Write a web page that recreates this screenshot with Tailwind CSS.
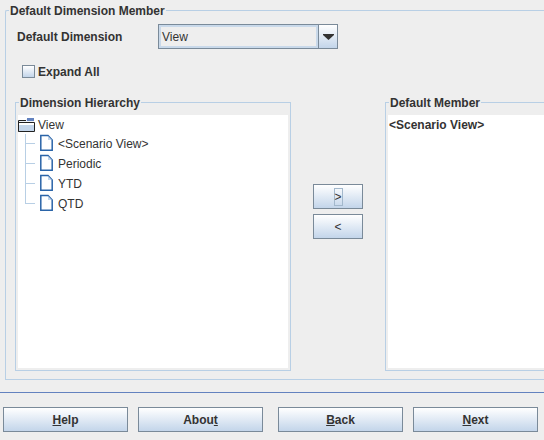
<!DOCTYPE html>
<html>
<head>
<meta charset="utf-8">
<script src="https://cdn.jsdelivr.net/npm/@tailwindcss/browser@4"></script>
</head>
<body class="w-[544px] h-[440px] overflow-hidden bg-[#eeeeee] text-[#333333] text-[12px] font-['Liberation_Sans',Arial,sans-serif]">

  <!-- Default Dimension Member group -->
  <fieldset class="ml-[5px] mt-[2px] w-[539px] h-[378px] border border-r-0 border-[#b8cfe5] rounded-tl-[2px]">
    <legend class="ml-[3px] px-[1px] pt-[2px] font-bold leading-[14px]">Default Dimension Member</legend>

    <div class="flex items-center mt-[6px] h-[25px]">
      <label class="ml-[11px] w-[141px] font-bold">Default Dimension</label>
      <div class="flex w-[180px] h-[25px] border border-[#7a8a99] bg-[#eeeeee]">
        <div class="flex-1 flex items-center pl-[1px] border-2 border-[#c9d9ea]">View</div>
        <div class="w-[19px] flex items-center justify-center border-l border-[#7a8a99] bg-gradient-to-b from-white to-[#c3d5ea]">
          <svg width="11" height="6" viewBox="0 0 11 6"><path d="M0 0H11V1L5.500 6L0 1Z" fill="#333333"/></svg>
        </div>
      </div>
    </div>

    <div class="flex items-center mt-[16px] ml-[16px] h-[13px]">
      <div class="w-[13px] h-[13px] border border-[#7a8a99] bg-gradient-to-b from-white to-[#c3d5ea]"></div>
      <span class="ml-[3px] font-bold">Expand All</span>
    </div>

    <div class="flex mt-[16px] ml-[9px]">
      <!-- left list -->
      <fieldset class="w-[276px] h-[277px] border border-[#b8cfe5] px-[2px] pt-[5px] pb-[2px]">
        <legend class="ml-[1px] px-[1px] pt-[2px] font-bold leading-[14px]">Dimension Hierarchy</legend>
        <div class="h-full bg-white">
          <div class="flex items-center h-[19px]">
            <svg width="17" height="14" viewBox="0 0 17 14" class="shrink-0">
              <path d="M1 3H8V1H16V5H1Z" fill="#eef3fa"/>
              <path d="M9 0H16V3H9Z" fill="#6382bf"/>
              <path d="M1 5H16V7H1Z" fill="#ffffff"/>
              <path d="M1 7H16V13H1Z" fill="#c3d5ea"/>
              <path d="M.5 13.500V2.500H8M.5 4.500H16.500V13.500H.5Z" fill="none" stroke="#222222"/>
            </svg>
            <span class="ml-[3px]">View</span>
          </div>
          <div class="flex items-center h-[20px]">
            <svg width="28" height="20" viewBox="0 0 28 20" class="shrink-0 ml-[7px]"><path d="M.5 0V20M0 9.500H10" stroke="#b8cfe5" fill="none"/><path d="M23 1.500H15.800V16.200H27.200V6Z" fill="#fff" stroke="#2a64a8" stroke-width="1.500"/><path d="M23 2V6H27" fill="#c3d5ea"/></svg>
            <span class="ml-[5px]">&lt;Scenario View&gt;</span>
          </div>
          <div class="flex items-center h-[20px]">
            <svg width="28" height="20" viewBox="0 0 28 20" class="shrink-0 ml-[7px]"><path d="M.5 0V20M0 9.500H10" stroke="#b8cfe5" fill="none"/><path d="M23 1.500H15.800V16.200H27.200V6Z" fill="#fff" stroke="#2a64a8" stroke-width="1.500"/><path d="M23 2V6H27" fill="#c3d5ea"/></svg>
            <span class="ml-[5px]">Periodic</span>
          </div>
          <div class="flex items-center h-[20px]">
            <svg width="28" height="20" viewBox="0 0 28 20" class="shrink-0 ml-[7px]"><path d="M.5 0V20M0 9.500H10" stroke="#b8cfe5" fill="none"/><path d="M23 1.500H15.800V16.200H27.200V6Z" fill="#fff" stroke="#2a64a8" stroke-width="1.500"/><path d="M23 2V6H27" fill="#c3d5ea"/></svg>
            <span class="ml-[5px]">YTD</span>
          </div>
          <div class="flex items-center h-[20px]">
            <svg width="28" height="20" viewBox="0 0 28 20" class="shrink-0 ml-[7px]"><path d="M.5 0V10M0 9.500H10" stroke="#b8cfe5" fill="none"/><path d="M23 1.500H15.800V16.200H27.200V6Z" fill="#fff" stroke="#2a64a8" stroke-width="1.500"/><path d="M23 2V6H27" fill="#c3d5ea"/></svg>
            <span class="ml-[5px]">QTD</span>
          </div>
        </div>
      </fieldset>

      <!-- move buttons -->
      <div class="flex flex-col gap-[5px] w-[50px] ml-[22px] mt-[90px]">
        <button class="h-[25px] border border-[#7a8a99] bg-gradient-to-b from-white to-[#c3d5ea] flex items-center justify-center"><span class="border border-[#a3b8cc] w-[9px] h-[18px] leading-[16px]">&gt;</span></button>
        <button class="h-[25px] border border-[#7a8a99] bg-gradient-to-b from-white to-[#c3d5ea]">&lt;</button>
      </div>

      <!-- right list -->
      <fieldset class="ml-[22px] w-[159px] h-[277px] border border-r-0 border-[#b8cfe5] pl-[2px] pt-[5px] pb-[2px]">
        <legend class="ml-[1px] px-[1px] pt-[2px] font-bold leading-[14px]">Default Member</legend>
        <div class="h-full bg-white pt-[3px] pl-[1px] font-bold leading-[14px]">&lt;Scenario View&gt;</div>
      </fieldset>
    </div>
  </fieldset>

  <div class="mt-[12px] border-t border-[#6382bf]"></div>

  <div class="flex mt-[14px] ml-[3px] font-bold">
    <button class="w-[125px] h-[25px] border border-[#7a8a99] bg-gradient-to-b from-white to-[#c3d5ea] font-bold"><span class="underline">H</span>elp</button>
    <button class="w-[125px] h-[25px] ml-[10px] border border-[#7a8a99] bg-gradient-to-b from-white to-[#c3d5ea] font-bold">Abou<span class="underline">t</span></button>
    <button class="w-[125px] h-[25px] ml-[15px] border border-[#7a8a99] bg-gradient-to-b from-white to-[#c3d5ea] font-bold"><span class="underline">B</span>ack</button>
    <button class="w-[125px] h-[25px] ml-[10px] border border-[#7a8a99] bg-gradient-to-b from-white to-[#c3d5ea] font-bold"><span class="underline">N</span>ext</button>
  </div>

</body>
</html>
